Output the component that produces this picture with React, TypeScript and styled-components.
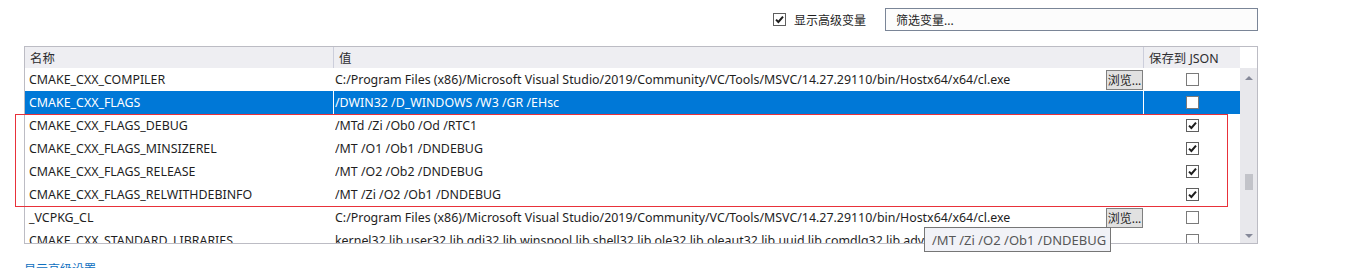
import React from "react";
import styled, { createGlobalStyle } from "styled-components";

const GlobalStyle = createGlobalStyle`
  html, body { margin: 0; padding: 0; background: #ffffff; }
  body {
    font-family: "Noto Sans", "Noto Sans CJK SC", sans-serif;
    font-size: 12px;
    color: #1e1e1e;
    width: 1360px;
    height: 268px;
    overflow: hidden;
  }
`;

const Page = styled.div`
  position: relative;
  width: 1360px;
  height: 268px;
`;

const TopBar = styled.div`
  height: 39px;
  display: flex;
  align-items: center;
  justify-content: flex-end;
  padding-right: 102px;
`;

const AdvancedToggle = styled.label`
  display: flex;
  align-items: center;
  gap: 8px;
  margin-right: 19px;
  font-size: 12px;
  color: #1e1e1e;
`;

const FilterInput = styled.div`
  width: 361px;
  height: 21px;
  border: 1px solid #7a8597;
  background: #fcfcfc;
  display: flex;
  align-items: center;
  padding-left: 10px;
  box-sizing: content-box;
  font-size: 12px;
  color: #1e1e1e;
`;

const Frame = styled.div`
  margin: 7px 0 0 24px;
  width: 1232px;
  height: 196px;
  border: 1px solid #bcbcc4;
  display: grid;
  grid-template-columns: 1215px 17px;
  grid-template-rows: 21px 175px;
  overflow: hidden;
`;

const Header = styled.div`
  display: grid;
  grid-template-columns: 308px 810px 97px;
  background: #eeeef2;
`;

const HeaderCell = styled.div<{ $first?: boolean }>`
  display: flex;
  align-items: center;
  padding-left: 5px;
  border-left: ${(p) => (p.$first ? "none" : "1px solid #cccedb")};
  color: #2d2d30;
  font-size: 12.4px;
  white-space: nowrap;
`;

const HeaderFiller = styled.div`
  background: #ffffff;
`;

const Body = styled.div`
  overflow: hidden;
  font-size: 12.4px;
`;

const Row = styled.div<{ $selected?: boolean }>`
  height: 23px;
  display: grid;
  grid-template-columns: 308px 810px 97px;
  color: ${(p) => (p.$selected ? "#ffffff" : "#1e1e1e")};
`;

const Cell = styled.div<{ $selected?: boolean; $divider?: boolean; $pad: number }>`
  display: flex;
  align-items: center;
  padding-left: ${(p) => p.$pad}px;
  background: ${(p) => (p.$selected ? "#0078d7" : "transparent")};
  border-left: ${(p) => (p.$divider ? `1px solid ${p.$selected ? "#ffffff" : "transparent"}` : "none")};
  overflow: hidden;
  white-space: nowrap;
  min-width: 0;
`;

const ValueText = styled.span`
  flex: 1;
  overflow: hidden;
  white-space: nowrap;
`;

const BrowseButton = styled.div`
  height: 18px;
  width: 35px;
  border: 1px solid #7f7f7f;
  background: #e1e1e1;
  color: #1e1e1e;
  font-size: 12px;
  display: flex;
  align-items: center;
  justify-content: center;
  flex-shrink: 0;
`;

const CheckCell = styled(Cell)`
  justify-content: center;
  padding-left: 0;
`;

const Box = styled.span<{ $dark?: boolean }>`
  width: 11px;
  height: 11px;
  border: 1px solid ${(p) => (p.$dark ? "#5f5f5f" : "#7a7a7a")};
  background: #ffffff;
  display: flex;
  align-items: center;
  justify-content: center;
`;

const Scrollbar = styled.div`
  background: #e8e8ec;
  position: relative;
  display: flex;
  flex-direction: column;
  align-items: center;
  justify-content: space-between;
  padding: 8px 0 5px;
`;

const Thumb = styled.div`
  position: absolute;
  left: 5px;
  top: 106px;
  width: 8px;
  height: 16px;
  background: #c2c3c9;
`;

const Arrow = styled.div<{ $down?: boolean }>`
  width: 0;
  height: 0;
  border-left: 4px solid transparent;
  border-right: 4px solid transparent;
  ${(p) => (p.$down ? "border-top: 4px solid #868999;" : "border-bottom: 4px solid #868999;")}
`;

const FooterLink = styled.div`
  margin: 18px 0 0 24px;
  color: #0e70c0;
  font-size: 12px;
  line-height: 16px;
`;

const Annotation = styled.div`
  position: absolute;
  left: 15px;
  top: 114px;
  width: 1211px;
  height: 91px;
  border: 1px solid #e8313a;
  pointer-events: none;
`;

const Tooltip = styled.div`
  position: absolute;
  left: 924px;
  top: 227px;
  width: 187px;
  height: 25px;
  border: 1px solid #767676;
  background: #f1f2f7;
  color: #575757;
  font-size: 13px;
  display: flex;
  align-items: center;
  padding-left: 7px;
  box-sizing: border-box;
  white-space: nowrap;
`;

const Check = () => (
  <svg width="9" height="9" viewBox="0 0 9 9">
    <path d="M1 4.6 L3.4 7 L8 1.6" fill="none" stroke="#1e1e1e" strokeWidth="2" />
  </svg>
);

const CheckBox = ({ checked }: { checked?: boolean }) => (
  <Box $dark={checked}>{checked ? <Check /> : null}</Box>
);

const CL_PATH =
  "C:/Program Files (x86)/Microsoft Visual Studio/2019/Community/VC/Tools/MSVC/14.27.29110/bin/Hostx64/x64/cl.exe";

type RowData = {
  name: string;
  value: string;
  browse?: boolean;
  checked?: boolean;
  selected?: boolean;
};

const rows: RowData[] = [
  { name: "CMAKE_CXX_COMPILER", value: CL_PATH, browse: true },
  { name: "CMAKE_CXX_FLAGS", value: "/DWIN32 /D_WINDOWS /W3 /GR /EHsc", selected: true },
  { name: "CMAKE_CXX_FLAGS_DEBUG", value: "/MTd /Zi /Ob0 /Od /RTC1", checked: true },
  { name: "CMAKE_CXX_FLAGS_MINSIZEREL", value: "/MT /O1 /Ob1 /DNDEBUG", checked: true },
  { name: "CMAKE_CXX_FLAGS_RELEASE", value: "/MT /O2 /Ob2 /DNDEBUG", checked: true },
  { name: "CMAKE_CXX_FLAGS_RELWITHDEBINFO", value: "/MT /Zi /O2 /Ob1 /DNDEBUG", checked: true },
  { name: "_VCPKG_CL", value: CL_PATH, browse: true },
  {
    name: "CMAKE_CXX_STANDARD_LIBRARIES",
    value:
      "kernel32.lib user32.lib gdi32.lib winspool.lib shell32.lib ole32.lib oleaut32.lib uuid.lib comdlg32.lib advapi32.lib",
  },
];

export default function App() {
  return (
    <Page>
      <GlobalStyle />
      <TopBar>
        <AdvancedToggle>
          <CheckBox checked />
          显示高级变量
        </AdvancedToggle>
        <FilterInput>筛选变量...</FilterInput>
      </TopBar>
      <Frame>
        <Header>
          <HeaderCell $first>名称</HeaderCell>
          <HeaderCell>值</HeaderCell>
          <HeaderCell>保存到 JSON</HeaderCell>
        </Header>
        <HeaderFiller />
        <Body>
          {rows.map((r) => (
            <Row key={r.name} $selected={r.selected}>
              <Cell $selected={r.selected} $pad={4}>
                {r.name}
              </Cell>
              <Cell $selected={r.selected} $divider $pad={1}>
                <ValueText>{r.value}</ValueText>
                {r.browse ? <BrowseButton>浏览...</BrowseButton> : null}
              </Cell>
              <CheckCell $selected={r.selected} $divider $pad={0}>
                <CheckBox checked={r.checked} />
              </CheckCell>
            </Row>
          ))}
        </Body>
        <Scrollbar>
          <Arrow />
          <Thumb />
          <Arrow $down />
        </Scrollbar>
      </Frame>
      <FooterLink>显示高级设置</FooterLink>
      <Annotation />
      <Tooltip>/MT /Zi /O2 /Ob1 /DNDEBUG</Tooltip>
    </Page>
  );
}
